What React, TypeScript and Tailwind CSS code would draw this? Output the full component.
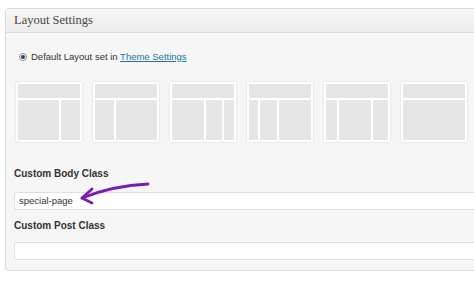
import React from 'react';

type Col = { w?: number; grow?: boolean };

const LAYOUTS: Col[][] = [
  [{ grow: true }, { w: 19 }],
  [{ w: 19 }, { grow: true }],
  [{ grow: true }, { w: 16 }, { w: 10 }],
  [{ w: 9 }, { w: 17 }, { grow: true }],
  [{ w: 11 }, { grow: true }, { w: 15 }],
  [{ grow: true }],
];

function Thumb({ cols }: { cols: Col[] }) {
  return (
    <div className="flex h-[60px] w-[66px] shrink-0 flex-col gap-[2px] bg-white p-[2px] shadow-[0_0_2px_rgba(0,0,0,0.14)]">
      <div className="h-[14px] bg-[#e6e6e6]" />
      <div className="flex flex-1 gap-[2px]">
        {cols.map((c, i) => (
          <div
            key={i}
            className={c.grow ? 'flex-1 bg-[#e6e6e6]' : 'shrink-0 bg-[#e6e6e6]'}
            style={c.grow ? undefined : { width: c.w }}
          />
        ))}
      </div>
    </div>
  );
}

export default function App() {
  return (
    <div
      className="relative h-[282px] w-[474px] overflow-hidden bg-white pl-[5px] pt-[8px]"
      style={{ fontFamily: '"Liberation Sans", Arial, sans-serif' }}
    >
      <div className="w-[500px] rounded-[3px] border border-[#dcdcdc] bg-[#f6f6f6]">
        {/* header */}
        <div className="flex h-[24px] items-center border-b border-[#dcdcdc] bg-gradient-to-b from-[#f6f6f6] to-[#ececec] pl-[8px]">
          <span className="text-[12.5px] text-[#464646]" style={{ fontFamily: '"Liberation Serif", Georgia, serif' }}>
            Layout Settings
          </span>
        </div>

        <div className="px-[8px] pb-[10px] pt-[17px]">
          <div className="ml-[5px] flex h-[14px] items-center gap-[4px] text-[9.5px] text-[#333]">
            <span className="flex h-[8px] w-[8px] items-center justify-center rounded-full border border-[#8a8a8a] bg-white">
              <span className="h-[4px] w-[4px] rounded-full bg-[#27405a]" />
            </span>
            <span>
              Default Layout set in{' '}
              <span className="text-[#21759b] underline">Theme Settings</span>
            </span>
          </div>

          <div className="ml-[2px] mt-[18px] flex gap-[11px]">
            {LAYOUTS.map((cols, i) => (
              <Thumb key={i} cols={cols} />
            ))}
          </div>

          <div className="mt-[25px] h-[14px] text-[10px] font-bold leading-[14px] text-[#333]">Custom Body Class</div>
          <div className="mt-[11px] flex h-[18px] items-center rounded-[2px] border border-[#dfdfdf] bg-white pl-[4px] text-[9.5px] text-[#333]">
            special-page
          </div>

          <div className="mt-[9px] h-[14px] text-[10px] font-bold leading-[14px] text-[#333]">Custom Post Class</div>
          <div className="mt-[9px] h-[18px] rounded-[2px] border border-[#dfdfdf] bg-white" />
        </div>
      </div>

      <svg className="pointer-events-none absolute left-0 top-0" width="474" height="282" viewBox="0 0 474 282">
        <path
          d="M148 184 C 126 185, 102 190, 82 198"
          fill="none"
          stroke="#7a1db6"
          strokeWidth="2.8"
          strokeLinecap="round"
        />
        <path
          d="M92 189 L82 198 L92 203"
          fill="none"
          stroke="#7a1db6"
          strokeWidth="2.8"
          strokeLinecap="round"
          strokeLinejoin="round"
        />
      </svg>
    </div>
  );
}
